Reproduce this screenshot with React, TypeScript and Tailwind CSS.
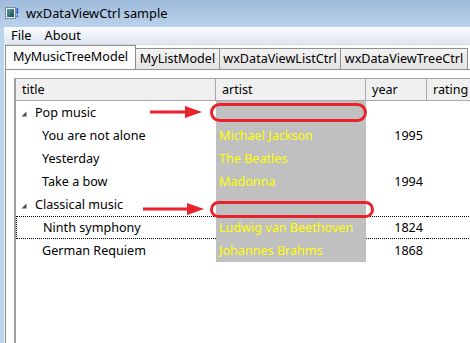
import React from "react";

const font = { fontFamily: '"Noto Sans", "Open Sans", sans-serif' };

type Row = {
  title: string;
  artist?: string;
  year?: string;
  group?: boolean;
  focused?: boolean;
};

const rows: Row[] = [
  { title: "Pop music", group: true },
  { title: "You are not alone", artist: "Michael Jackson", year: "1995" },
  { title: "Yesterday", artist: "The Beatles" },
  { title: "Take a bow", artist: "Madonna", year: "1994" },
  { title: "Classical music", group: true },
  { title: "Ninth symphony", artist: "Ludwig van Beethoven", year: "1824", focused: true },
  { title: "German Requiem", artist: "Johannes Brahms", year: "1868" },
];

function WindowIcon() {
  return (
    <svg width="14" height="13" viewBox="0 0 14 13">
      <defs>
        <linearGradient id="ic" x1="0" y1="0" x2="1" y2="1">
          <stop offset="0" stopColor="#5aa0a8" />
          <stop offset="1" stopColor="#1c4a4a" />
        </linearGradient>
      </defs>
      <rect x="0.5" y="0.5" width="10" height="11" fill="#e8eef4" stroke="#7d8a99" />
      <rect x="2" y="2" width="7" height="8" fill="url(#ic)" />
      <rect x="11.5" y="1" width="1.6" height="6" fill="#2b58c8" />
      <rect x="11.5" y="8.5" width="1.6" height="1.6" fill="#2b58c8" />
    </svg>
  );
}

function Expander() {
  return (
    <svg width="6" height="6" viewBox="0 0 6 6" className="shrink-0">
      <polygon points="5.5,0.5 5.5,5.5 0.5,5.5" fill="#4a4a4a" />
    </svg>
  );
}

function Tab({ label, width, active }: { label: string; width: string; active?: boolean }) {
  if (active) {
    return (
      <div
        className={`${width} z-10 -mr-[1px] flex h-[24px] shrink-0 items-center justify-center border border-b-0 border-[#8e8f8f] bg-[#fcfcfc] text-[12.6px] text-black`}
      >
        {label}
      </div>
    );
  }
  return (
    <div
      className={`${width} -mr-[1px] mt-[3px] flex h-[21px] shrink-0 items-center justify-center border border-b-0 border-[#8e8f8f] bg-gradient-to-b from-[#f3f3f3] to-[#e3e3e3] text-[12.6px] text-black`}
    >
      {label}
    </div>
  );
}

function HeaderCell({ label, width }: { label: string; width: string }) {
  return (
    <div className={`${width} flex h-full shrink-0 items-center border-r border-[#a7a7a7] px-[6px] pt-[1px] text-[12.6px]`}>
      {label}
    </div>
  );
}

function DataRow({ row }: { row: Row }) {
  const dot = row.focused ? "border-y border-dotted border-black" : "";
  return (
    <div className="flex h-[23px] text-[12.6px]">
      <div
        className={`flex w-[200px] shrink-0 items-center pt-[2px] ${dot} ${row.focused ? "border-l" : ""} ${
          row.group ? "pl-[5px]" : "pl-[26px]"
        }`}
      >
        {row.group ? (
          <>
            <Expander />
            <span className="ml-[8px]">{row.title}</span>
          </>
        ) : (
          <span>{row.title}</span>
        )}
      </div>
      <div className="flex w-[150px] shrink-0 items-center bg-[#c0c0c0] pl-[3px] pt-[2px] text-[#ffff00]">
        {row.artist}
      </div>
      <div className={`flex w-[61px] shrink-0 items-center justify-end pr-[4px] pt-[2px] ${dot}`}>{row.year}</div>
      <div className={`flex-1 ${dot}`} />
    </div>
  );
}

export default function App() {
  return (
    <div className="relative h-[343px] w-[470px] overflow-hidden bg-white text-black" style={font}>
      {/* title bar */}
      <div className="flex h-[27px] items-center bg-gradient-to-b from-[#9fbbdb] to-[#bad2eb] pl-[5px]">
        <WindowIcon />
        <span className="ml-[7px] text-[12.8px] text-black">wxDataViewCtrl sample</span>
      </div>

      <div className="flex h-[316px]">
        <div className="w-[4px] shrink-0 bg-[#bcd4ec]" />
        <div className="flex flex-1 flex-col bg-[#f0f0f0]">
          {/* menu bar */}
          <div className="flex h-[18px] items-center gap-[13px] border-b border-[#d3d8e4] bg-gradient-to-b from-[#fbfcfe] to-[#dfe5f2] pl-[7px] text-[12.8px]">
            <span>File</span>
            <span>About</span>
          </div>

          {/* tabs */}
          <div className="flex h-[24px] items-end bg-white pl-[1px]">
            <Tab label="MyMusicTreeModel" width="w-[131px]" active />
            <Tab label="MyListModel" width="w-[85px]" />
            <Tab label="wxDataViewListCtrl" width="w-[122px]" />
            <Tab label="wxDataViewTreeCtrl" width="w-[128px]" />
          </div>

          {/* page */}
          <div className="ml-[1px] flex-1 border-l border-t border-[#8e8f8f] bg-white pl-[8px] pt-[8px]">
            <div className="h-full border-l-2 border-t border-[#a0a0a0]">
              <div className="flex h-[22px] border-b border-[#a7a7a7] bg-[#f0f0f0]">
                <HeaderCell label="title" width="w-[200px]" />
                <HeaderCell label="artist" width="w-[150px]" />
                <HeaderCell label="year" width="w-[61px]" />
                <HeaderCell label="rating" width="w-[60px]" />
              </div>
              {rows.map((row) => (
                <DataRow key={row.title} row={row} />
              ))}
            </div>
          </div>
        </div>
      </div>

      {/* annotations */}
      <div className="absolute left-[210px] top-[103px] h-[19px] w-[157px] rounded-full border-[3px] border-[#e8232b]" />
      <div className="absolute left-[210px] top-[201px] h-[17px] w-[164px] rounded-full border-[3px] border-[#e8232b]" />
      <svg className="absolute left-[148px] top-[104px]" width="56" height="16" viewBox="0 0 56 16">
        <rect x="2" y="6.5" width="38" height="3" fill="#e8232b" />
        <polygon points="37,2 54,8 37,14" fill="#e8232b" />
      </svg>
      <svg className="absolute left-[141px] top-[201px]" width="66" height="16" viewBox="0 0 66 16">
        <rect x="2" y="6.5" width="46" height="3" fill="#e8232b" />
        <polygon points="46,2 63,8 46,14" fill="#e8232b" />
      </svg>
    </div>
  );
}
